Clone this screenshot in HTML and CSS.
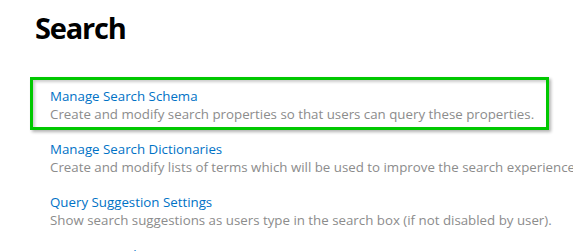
FILE: index.html
```
<!DOCTYPE html>
<html lang="en">

<head>
    <meta charset="UTF-8">
    <meta name="viewport" content="width=device-width, initial-scale=1.0">
    <title>Search</title>
    <link rel="stylesheet" href="styles.css">
</head>

<body>
    <div class="pagina">
        <h1 class="titulo">Search</h1>
        <ul class="lista">
            <li class="item marcado">
                <a href="#">Manage Search Schema</a>
                <p>Create and modify search properties so that users can query these properties.</p>
            </li>
            <li class="item">
                <a href="#">Manage Search Dictionaries</a>
                <p>Create and modify lists of terms which will be used to improve the search experience.</p>
            </li>
            <li class="item">
                <a href="#">Query Suggestion Settings</a>
                <p>Show search suggestions as users type in the search box (if not disabled by user).</p>
            </li>
            <li class="item">
                <a href="#">Manage Result Sources</a>
                <p>Result sources can be used to scope search results and federate queries to external sources.</p>
            </li>
        </ul>
    </div>
</body>

</html>
```

FILE: styles.css
```
* {
    margin: 0;
    padding: 0;
    font-family: 'Open Sans', 'Noto Sans', sans-serif;
}
html, body {
    overflow: hidden;
    background-color: white;
}

.pagina {
    padding: 8px 0 0 30px;
}

.titulo {
    font-size: 29px;
    font-weight: bold;
    line-height: 40px;
    color: black;
    padding-left: 5px;
    letter-spacing: -1.2px;
}

.lista {
    list-style: none;
    margin-top: 29px;
}

.item {
    width: 480px;
    padding: 7px 16px 4px 17px;
    border: 3px solid transparent;
    font-size: 13.3px;
    line-height: 18px;
    white-space: nowrap;
}

.item a {
    display: block;
    color: #0072c6;
    text-decoration: none;
}

.item p {
    color: #8c8c8c;
}

.marcado {
    border-color: #00c800;
    box-shadow: 2px 2px 3px rgba(0, 0, 0, 0.3), inset 2px 2px 3px rgba(0, 0, 0, 0.2);
}
```
